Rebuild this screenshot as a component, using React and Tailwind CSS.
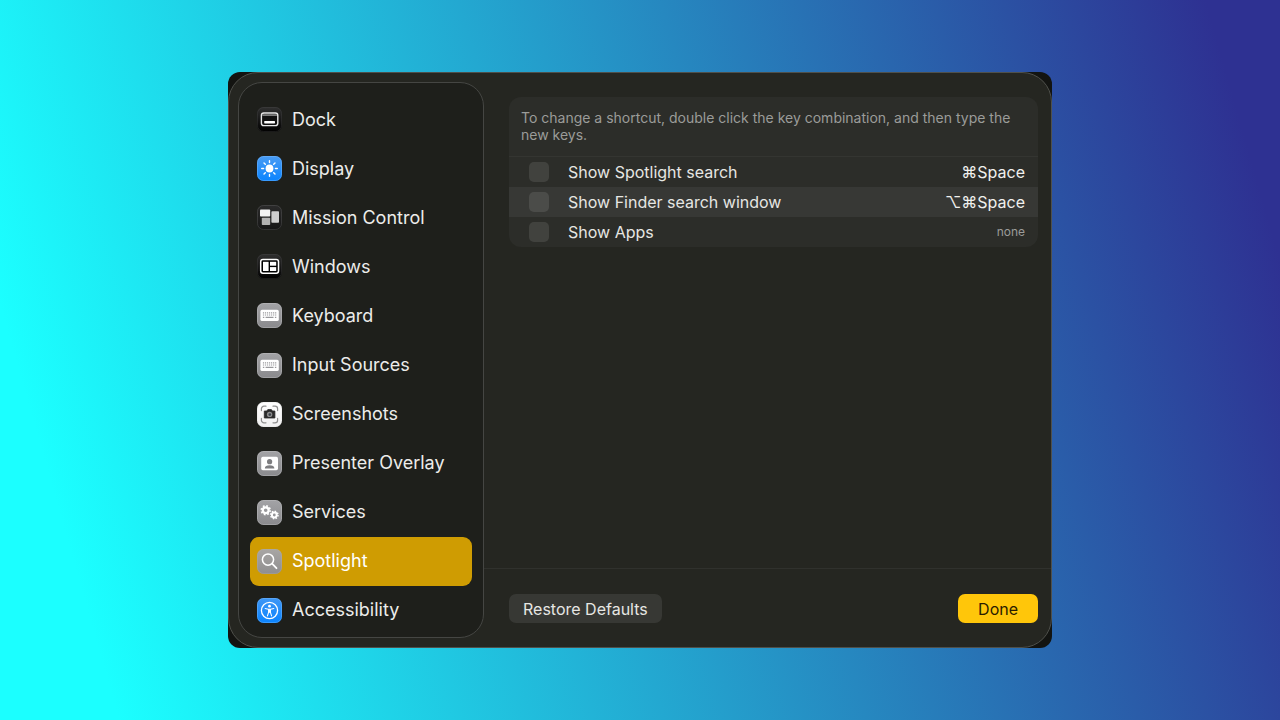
import { useId, useState } from "react";

// Rounded tile behind every sidebar glyph
function Tile({ from, to, edge, children }) {
  const id = useId();
  return (
    <svg viewBox="0 0 25 25" className="size-[25px] shrink-0" aria-hidden="true">
      <defs>
        <linearGradient id={id} x1="0" y1="0" x2="0" y2="1">
          <stop offset="0" stopColor={from} />
          <stop offset="1" stopColor={to} />
        </linearGradient>
      </defs>
      <rect width="25" height="25" rx="6.5" fill={`url(#${id})`} />
      <rect x="0.5" y="0.5" width="24" height="24" rx="6" fill="none" stroke={edge} strokeOpacity="0.35" />
      {children}
    </svg>
  );
}

function DockIcon() {
  return (
    <Tile from="#303030" to="#000000" edge="#4a4a4a">
      <rect x="4.4" y="6" width="16.4" height="12.6" rx="2.4" fill="#111" stroke="#e8e8e8" strokeWidth="1.4" />
      <path d="M5.3 8.1h14.6" stroke="#8a8a8a" strokeWidth="1.6" />
      <rect x="7.2" y="14" width="10.8" height="2.4" rx="0.6" fill="#fff" />
    </Tile>
  );
}

function DisplayIcon() {
  return (
    <Tile from="#4a9cf3" to="#0a84ff" edge="#8cc4ff">
      <circle cx="12.5" cy="12.5" r="3.9" fill="#fff" />
      <path
        d="M12.5 4.7v1.9M12.5 18.4v1.9M4.7 12.5h1.9M18.4 12.5h1.9M7 7l1.3 1.3M16.7 16.7L18 18M7 18l1.3-1.3M16.7 8.3L18 7"
        stroke="#fff"
        strokeWidth="1.4"
        strokeLinecap="round"
      />
    </Tile>
  );
}

function MissionControlIcon() {
  return (
    <Tile from="#2b2b2b" to="#161616" edge="#6a6a6a">
      <rect x="3" y="4.4" width="10.2" height="7.2" rx="0.8" fill="#f2f2f2" />
      <rect x="14.4" y="6.2" width="7.6" height="11.6" rx="0.8" fill="#cfcfcf" />
      <rect x="4.8" y="12.8" width="8.4" height="7.2" rx="0.8" fill="#b2b2b2" />
    </Tile>
  );
}

function WindowsIcon() {
  return (
    <Tile from="#303030" to="#000000" edge="#4a4a4a">
      <rect x="3.7" y="5.5" width="17.8" height="13.8" rx="2.2" fill="#000" stroke="#fff" strokeWidth="1.5" />
      <rect x="6" y="7.8" width="5.6" height="9.2" fill="#fff" />
      <rect x="13" y="7.8" width="6.2" height="3.9" fill="#fff" />
      <rect x="13" y="13.1" width="6.2" height="3.9" fill="#fff" />
    </Tile>
  );
}

function KeyboardIcon() {
  return (
    <Tile from="#a3a3a6" to="#8a8a8d" edge="#c8c8ca">
      <rect x="3.4" y="6.8" width="18.4" height="11.2" rx="1.6" fill="#fff" />
      <path d="M5.9 9.8h13.4M5.9 12h13.4" stroke="#98989b" strokeWidth="1.2" strokeDasharray="1.2 0.83" />
      <path d="M5.9 14.3h1.4M8.6 14.3h7.9M17.9 14.3h1.4" stroke="#98989b" strokeWidth="1.2" />
    </Tile>
  );
}

function ScreenshotsIcon() {
  return (
    <Tile from="#ffffff" to="#f0f0f0" edge="#dddddd">
      <path
        d="M4.4 8.6V6.8a2.6 2.6 0 0 1 2.6-2.6h2M16 4.2h2a2.6 2.6 0 0 1 2.6 2.6v1.8M20.6 16.4v1.8a2.6 2.6 0 0 1-2.6 2.6h-2M9 20.8H7a2.6 2.6 0 0 1-2.6-2.6v-1.8"
        fill="none"
        stroke="#8f8f8f"
        strokeWidth="1.2"
        strokeLinecap="round"
      />
      <path d="M7.3 9h2.5l1-1.4h3.6l1 1.4h2.5v7H7.3z" fill="#2b2b2b" stroke="#2b2b2b" strokeWidth="0.8" strokeLinejoin="round" />
      <circle cx="12.6" cy="12.4" r="2.7" fill="#8c8c8c" />
      <circle cx="12.8" cy="12.6" r="1.3" fill="#3b4148" />
    </Tile>
  );
}

function PresenterIcon() {
  return (
    <Tile from="#a3a3a6" to="#8a8a8d" edge="#c8c8ca">
      <rect x="4.2" y="5.8" width="16.8" height="13.4" rx="1.6" fill="#fff" />
      <circle cx="12.6" cy="10.7" r="2.6" fill="#7d7d80" />
      <path d="M7.8 17.6c0-2.4 1.9-3.3 4.8-3.3s4.8 0.9 4.8 3.3z" fill="#7d7d80" />
    </Tile>
  );
}

function ServicesIcon() {
  return (
    <Tile from="#a3a3a6" to="#8a8a8d" edge="#c8c8ca">
      <circle cx="8.7" cy="10.2" r="2.9" fill="none" stroke="#fff" strokeWidth="2.2" />
      <circle cx="8.7" cy="10.2" r="4.4" fill="none" stroke="#fff" strokeWidth="1.7" strokeDasharray="1.73 1.73" />
      <circle cx="17.3" cy="15" r="2.4" fill="none" stroke="#fff" strokeWidth="2" />
      <circle cx="17.3" cy="15" r="3.7" fill="none" stroke="#fff" strokeWidth="1.5" strokeDasharray="1.45 1.45" />
    </Tile>
  );
}

function SpotlightIcon() {
  return (
    <Tile from="#a8a6a4" to="#8f8e8f" edge="#b8b09c">
      <circle cx="11" cy="10.6" r="5.6" fill="none" stroke="#fff" strokeWidth="1.5" />
      <path d="M15.1 14.7l4.4 4.5" stroke="#fff" strokeWidth="1.8" strokeLinecap="round" />
    </Tile>
  );
}

function AccessibilityIcon() {
  return (
    <Tile from="#3f97f5" to="#0a84ff" edge="#8cc4ff">
      <circle cx="12.5" cy="12.5" r="8.1" fill="none" stroke="#fff" strokeWidth="1.3" />
      <circle cx="12.5" cy="8.2" r="1.4" fill="#fff" />
      <path
        d="M8.2 10.5l3.1 0.7h2.4l3.1-0.7M11.6 11.4v2.9l-1.2 3.6M13.4 11.4v2.9l1.2 3.6"
        fill="none"
        stroke="#fff"
        strokeWidth="1.1"
        strokeLinecap="round"
        strokeLinejoin="round"
      />
      <path d="M11.2 11.2h2.6v3.6h-2.6z" fill="#fff" />
    </Tile>
  );
}

const sections = [
  { name: "Dock", icon: DockIcon },
  { name: "Display", icon: DisplayIcon },
  { name: "Mission Control", icon: MissionControlIcon },
  { name: "Windows", icon: WindowsIcon },
  { name: "Keyboard", icon: KeyboardIcon },
  { name: "Input Sources", icon: KeyboardIcon },
  { name: "Screenshots", icon: ScreenshotsIcon },
  { name: "Presenter Overlay", icon: PresenterIcon },
  { name: "Services", icon: ServicesIcon },
  { name: "Spotlight", icon: SpotlightIcon },
  { name: "Accessibility", icon: AccessibilityIcon },
];

const shortcuts = [
  { id: "spotlight", label: "Show Spotlight search", keys: "⌘Space" },
  { id: "finder", label: "Show Finder search window", keys: "⌥⌘Space" },
  { id: "apps", label: "Show Apps", keys: null },
];

function Sidebar({ active, onSelect }) {
  return (
    <nav className="flex w-[246px] shrink-0 flex-col rounded-3xl border border-[#454643] bg-[#1e1f1b] px-[11px] pt-3 pb-0.5">
      <ul className="flex flex-1 flex-col">
        {sections.map(({ name, icon: Icon }) => (
          <li key={name} className="flex min-h-10 flex-1">
            <button
              type="button"
              onClick={() => onSelect(name)}
              className={`flex w-full items-center gap-2.5 rounded-[9px] pl-[7px] text-left text-lg ${
                name === active ? "bg-[#cf9c02] text-white" : "text-[#ececea]"
              }`}
            >
              <Icon />
              {name}
            </button>
          </li>
        ))}
      </ul>
    </nav>
  );
}

function ShortcutTable() {
  return (
    <section className="overflow-hidden rounded-xl bg-[#2c2d29]">
      <p className="border-b border-[#343531] px-3 pt-3 pb-[13px] text-sm leading-[17px] text-[#9b9c99]">
        To change a shortcut, double click the key combination, and then type the new keys.
      </p>
      <table className="w-full text-base">
        <tbody>
          {shortcuts.map(({ id, label, keys }) => (
            <tr key={id} className="h-[30px] even:bg-[#373835]">
              <td className="w-[59px] pl-5">
                <input
                  id={id}
                  type="checkbox"
                  className="block size-5 appearance-none rounded-[5px] bg-white/10 checked:bg-[#ffc60a]"
                />
              </td>
              <td className="text-[#e6e6e3]">
                <label htmlFor={id}>{label}</label>
              </td>
              <td className="pr-[13px] text-right text-[#f0f0ee]">
                {keys ?? <span className="block text-xs text-[#9b9c99]">none</span>}
              </td>
            </tr>
          ))}
        </tbody>
      </table>
    </section>
  );
}

function App() {
  const [active, setActive] = useState("Spotlight");

  return (
    <main className="flex min-h-screen items-center justify-center bg-[linear-gradient(74deg,#1bffff_8%,#2e3192_95%)] font-[Inter,sans-serif]">
      <div className="flex min-h-[80vh] w-full max-w-[824px] rounded-xl bg-[#131411]">
        <div className="flex w-full rounded-[30px] border border-[#4f504b] bg-[#252621]">
          <div className="flex py-[9px] pl-[9px]">
            <Sidebar active={active} onSelect={setActive} />
          </div>
          <div className="flex min-w-0 flex-1 flex-col">
            <div className="flex-1 pt-6 pr-[13px] pl-[25px]">
              <ShortcutTable />
            </div>
            <footer className="flex items-center justify-between border-t border-[#30312d] pt-[25px] pr-[13px] pb-6 pl-[25px]">
              <button type="button" className="h-[29px] rounded-[7px] bg-[#373834] px-3.5 text-base text-[#e6e6e3]">
                Restore Defaults
              </button>
              <button type="button" className="h-[29px] rounded-[7px] bg-[#ffc60a] px-5 text-base text-[#2a1c00]">
                Done
              </button>
            </footer>
          </div>
        </div>
      </div>
    </main>
  );
}

export default App;
